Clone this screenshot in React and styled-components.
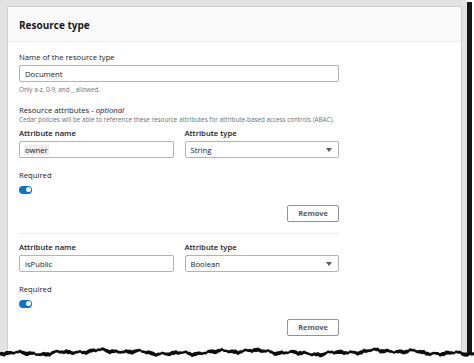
import React from "react";
import styled, { createGlobalStyle } from "styled-components";

const Global = createGlobalStyle`
  html, body { margin: 0; padding: 0; background: #ffffff; }
  body { font-family: "Open Sans", "Noto Sans", sans-serif; color: #16191f; }
  * { box-sizing: border-box; }
`;

const Frame = styled.div`
  position: relative;
  width: 474px;
  height: 363px;
  overflow: hidden;
  background: #ffffff;
`;

const Paper = styled.div`
  width: 467px;
  height: 356px;
  background: #e3e3e3;
  padding: 6px 5px 0 7px;
  box-shadow: 5px 2px 0 #161616;
  display: flex;
`;

const Card = styled.div`
  flex: 1;
  display: flex;
  flex-direction: column;
  background: #ffffff;
  border: 1px solid #cfcfcf;
  border-bottom: none;
`;

const Header = styled.div`
  height: 35px;
  display: flex;
  align-items: center;
  padding: 0 11px;
  background: #fafafa;
  border-bottom: 1px solid #e9ebed;
`;

const Title = styled.h2`
  margin: 0;
  font-size: 10px;
  font-weight: 700;
  color: #16191f;
  padding-top: 1px;
`;

const Body = styled.div`
  width: 342px;
  padding: 10px 11px 0 11px;
  display: flex;
  flex-direction: column;
`;

const Label = styled.div`
  font-size: 7.7px;
  line-height: 10px;
  font-weight: ${(p) => (p.$bold ? 600 : 400)};
  color: #16191f;
  margin-top: ${(p) => p.$mt || 0}px;
  white-space: nowrap;
  em { font-style: italic; }
`;

const Hint = styled.div`
  font-size: 6.3px;
  line-height: 9px;
  color: #687078;
  margin-top: ${(p) => p.$mt || 0}px;
  white-space: nowrap;
`;

const Input = styled.div`
  height: 17px;
  margin-top: ${(p) => p.$mt || 0}px;
  border: 1px solid #aab7b8;
  border-radius: 2px;
  background: #ffffff;
  display: flex;
  align-items: center;
  justify-content: space-between;
  padding: 0 6px 0 5px;
  font-size: 7.7px;
  color: #16191f;
`;

const Selected = styled.span`
  background: #ececec;
  padding: 0 1px;
  margin-left: -1px;
`;

const Pair = styled.div`
  display: grid;
  grid-template-columns: 1fr 1fr;
  column-gap: 11px;
`;

const Col = styled.div`
  display: flex;
  flex-direction: column;
`;

const Toggle = styled.div`
  width: 13px;
  height: 8px;
  border-radius: 4px;
  background: #0972d3;
  margin-top: 6px;
  position: relative;
  &::after {
    content: "";
    position: absolute;
    right: 1.5px;
    top: 1.5px;
    width: 5px;
    height: 5px;
    border-radius: 50%;
    background: #ffffff;
  }
`;

const Actions = styled.div`
  display: flex;
  justify-content: flex-end;
  margin-top: 11px;
`;

const Button = styled.button`
  width: 52px;
  height: 17px;
  border: 1px solid #8d9596;
  border-radius: 2px;
  background: #ffffff;
  font-family: inherit;
  font-size: 7.4px;
  font-weight: 700;
  color: #545b64;
  padding: 0;
  display: flex;
  align-items: center;
  justify-content: center;
`;

const Divider = styled.div`
  height: 1px;
  background: #eaeded;
  margin-top: 11px;
`;

const Torn = styled.svg`
  position: absolute;
  left: 0;
  top: 338px;
  width: 474px;
  height: 25px;
`;

function Caret() {
  return (
    <svg width="6" height="4" viewBox="0 0 6 4">
      <path d="M0 0 H6 L3 4 Z" fill="#545b64" />
    </svg>
  );
}

function Attribute({ name, type, first }) {
  return (
    <>
      <Pair>
        <Col>
          <Label $bold $mt={first ? 3.5 : 8}>Attribute name</Label>
          <Input $mt={3.5}>{first ? <Selected>{name}</Selected> : name}</Input>
        </Col>
        <Col>
          <Label $bold $mt={first ? 3.5 : 8}>Attribute type</Label>
          <Input $mt={3.5}>
            {type}
            <Caret />
          </Input>
        </Col>
      </Pair>
      <Label $mt={11.5}>Required</Label>
      <Toggle />
      <Actions>
        <Button>Remove</Button>
      </Actions>
    </>
  );
}

function edgePoints() {
  const pts = [];
  for (let x = 0; x <= 474; x += 2) {
    const y =
      12.5 +
      1.4 * Math.sin(x * 0.045) +
      1.0 * Math.sin(x * 0.16 + 1.3) +
      0.7 * Math.sin(x * 0.53 + 0.4) +
      0.5 * Math.sin(x * 1.37 + 2.1);
    pts.push([x, y]);
  }
  return pts;
}

function TornEdge() {
  const pts = edgePoints();
  const top = pts.map(([x, y], i) => `${i ? "L" : "M"}${x} ${y.toFixed(2)}`).join(" ");
  const low = pts
    .map(([x, y], i) => `${i ? "L" : "M"}${x} ${(y + 3.4 + 0.8 * Math.sin(x * 0.3)).toFixed(2)}`)
    .join(" ");
  return (
    <Torn viewBox="0 0 474 25">
      <defs>
        <filter id="soft" x="-5%" y="-50%" width="110%" height="200%">
          <feGaussianBlur stdDeviation="0.6" />
        </filter>
      </defs>
      <path d={`${top} L474 25 L0 25 Z`} fill="#111111" filter="url(#soft)" />
      <path d={`${low} L474 25 L0 25 Z`} fill="#ffffff" filter="url(#soft)" />
    </Torn>
  );
}

export default function App() {
  return (
    <>
      <Global />
      <Frame>
        <Paper>
          <Card>
            <Header>
              <Title>Resource type</Title>
            </Header>
            <Body>
              <Label>Name of the resource type</Label>
              <Input $mt={3}>Document</Input>
              <Hint $mt={2.5}>Only a-z, 0-9, and _ allowed.</Hint>
              <Label $mt={11.5}>
                Resource attributes - <em>optional</em>
              </Label>
              <Hint>
                Cedar policies will be able to reference these resource attributes for attribute-based access controls (ABAC).
              </Hint>
              <Attribute first name="owner" type="String" />
              <Divider />
              <Attribute name="isPublic" type="Boolean" />
            </Body>
          </Card>
        </Paper>
        <TornEdge />
      </Frame>
    </>
  );
}
